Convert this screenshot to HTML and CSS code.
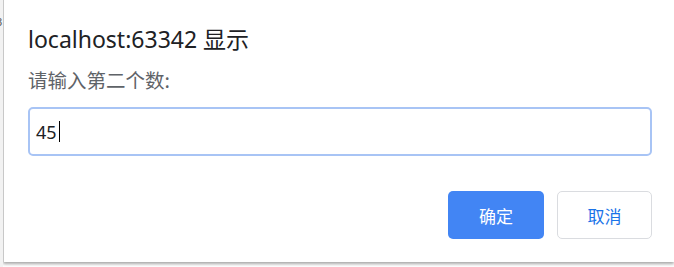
FILE: index.html
```html
<!DOCTYPE html>
<html>
<head>
<meta charset="utf-8">
<link rel="stylesheet" href="styles.css">
</head>
<body>
<div class="page">
  <div class="edge"><span class="stray">3</span></div>
  <div class="dialog">
    <div class="title">localhost:63342 显示</div>
    <div class="label">请输入第二个数:</div>
    <div class="input"><span class="value">45</span><span class="caret"></span></div>
    <div class="actions">
      <button class="btn primary">确定</button>
      <button class="btn secondary">取消</button>
    </div>
  </div>
</div>
</body>
</html>
```
FILE: styles.css
```css
html, body {
  margin: 0;
  padding: 0;
  background: #ffffff;
}
.page {
  display: flex;
  width: 674px;
  height: 267px;
  overflow: hidden;
  font-family: "Noto Sans", "Noto Sans CJK SC", sans-serif;
}
.edge {
  width: 3px;
  flex: none;
  background: #f2f2f2;
  position: relative;
}
.stray {
  position: absolute;
  left: -4px;
  top: 14px;
  font-size: 11px;
  color: #555;
}
.dialog {
  flex: 1;
  height: 262px;
  box-sizing: border-box;
  background: #fff;
  border-left: 1px solid #c8c8c8;
  box-shadow: 0 2px 3px rgba(0,0,0,0.35);
  padding: 24px 22px 0 24px;
}
.title {
  font-size: 23px;
  color: #202124;
  line-height: 30px;
  height: 30px;
}
.label {
  margin-top: 14px;
  font-size: 19.5px;
  color: #5f6368;
  line-height: 24px;
  font-family: "Noto Sans CJK SC", sans-serif;
}
.input {
  margin-top: 15px;
  height: 49px;
  box-sizing: border-box;
  border: 2px solid #a8c4f5;
  border-radius: 5px;
  display: flex;
  align-items: center;
  padding-left: 6px;
  font-size: 18px;
  color: #202124;
}
.caret {
  width: 1px;
  height: 21px;
  background: #000;
  margin-left: 2px;
}
.actions {
  margin-top: 35px;
  display: flex;
  justify-content: flex-end;
  gap: 13px;
}
.btn {
  font-family: "Noto Sans CJK SC", sans-serif;
  font-size: 17px;
  height: 48px;
  border-radius: 5px;
  box-sizing: border-box;
  cursor: pointer;
}
.primary {
  width: 96px;
  background: #4285f4;
  border: none;
  color: #fff;
}
.secondary {
  width: 95px;
  background: #fff;
  border: 1px solid #dadce0;
  color: #1a73e8;
}
```
